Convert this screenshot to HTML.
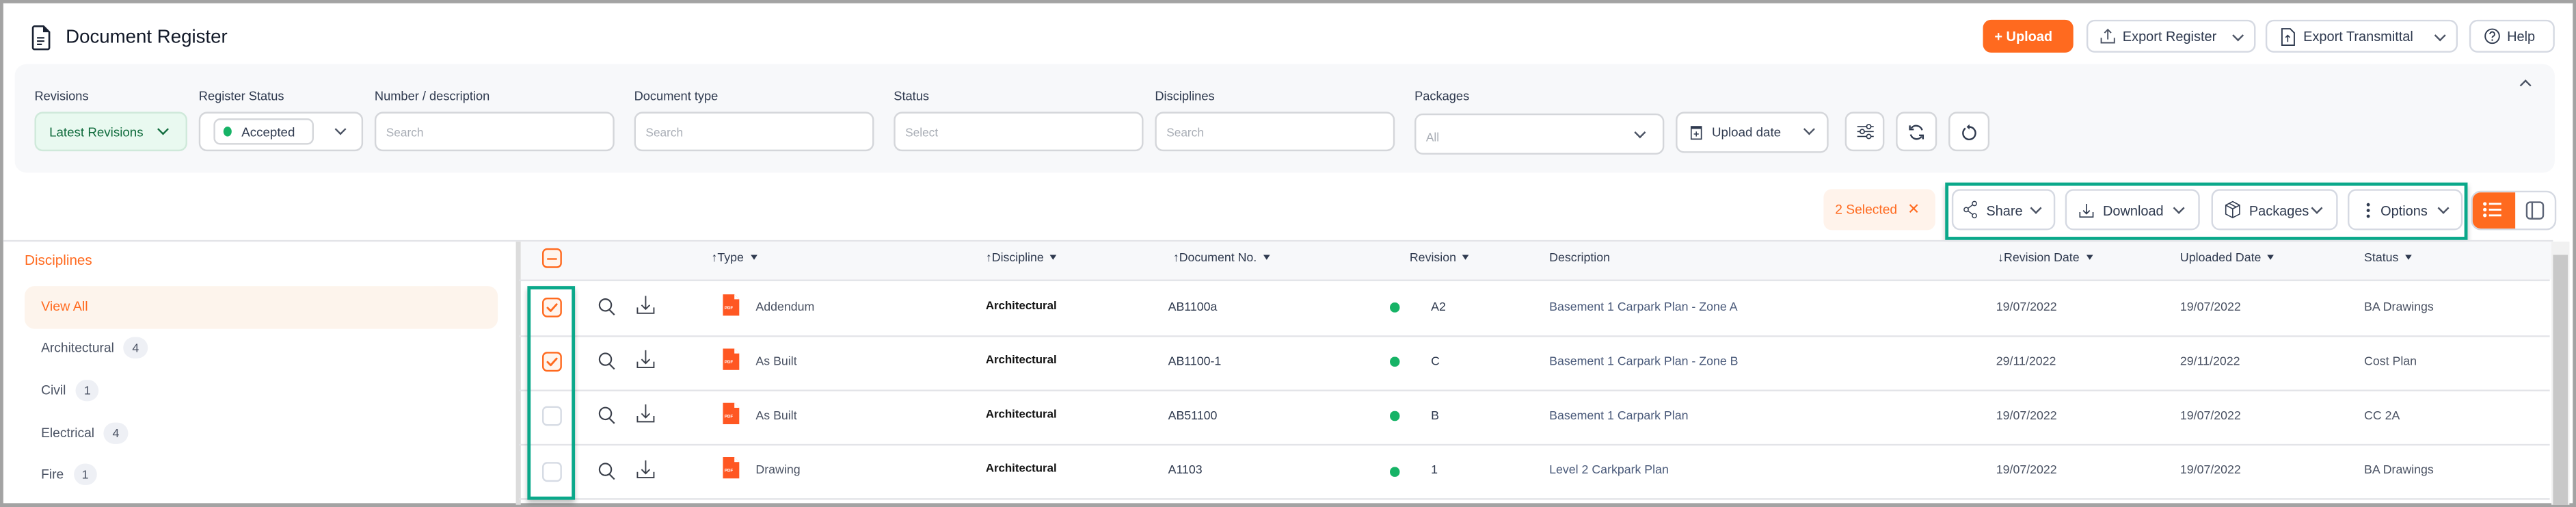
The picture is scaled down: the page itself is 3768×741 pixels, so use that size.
<!DOCTYPE html>
<html><head><meta charset="utf-8"><style>
*{box-sizing:border-box;margin:0;padding:0}
html,body{width:3768px;height:741px;overflow:hidden;background:#a3a3a3}
#w{position:absolute;left:0;top:0;width:1568px;height:308.4px;transform:scale(2.4031);transform-origin:0 0;font-family:"Liberation Sans",sans-serif;color:#2f3a4f}
.a{position:absolute}
.pg{left:2px;top:2px;width:1563.5px;height:304px;background:#fff}
.btn{position:absolute;border:1px solid #d5d9e2;border-radius:5px;background:#fff;display:flex;align-items:center;font-size:8.3px;color:#2f3a4f;white-space:nowrap}
.lbl{position:absolute;top:54px;font-size:7.6px;color:#2f3a4f}
.inp{position:absolute;top:68px;height:24px;border:1px solid #d4d6da;border-radius:5px;background:#fff;font-size:7.2px;color:#a8adb5;display:flex;align-items:center;padding-left:6px}
.chev{position:absolute;width:4.5px;height:4.5px;border-right:0.7px solid #4a5263;border-bottom:0.7px solid #4a5263;transform:rotate(45deg)}
.t{position:absolute;font-size:7.4px;white-space:nowrap}
.h{position:absolute;top:152px;font-size:7.4px;color:#2f3a4f;white-space:nowrap}
.tri{display:inline-block;width:0;height:0;border-left:2px solid transparent;border-right:2px solid transparent;border-top:3.5px solid #2f3a4f;margin-left:4px;vertical-align:1px}
.rl{position:absolute;left:316px;width:1236px;height:1px;background:#e3e4e8}
.cb{position:absolute;left:330px;width:12px;height:12px;border-radius:3px;border:0.8px solid #d6dbe4;background:#fff}
.cb.on{border-color:#ff6a1f;background:#fff5ee}
.bdg{display:inline-block;background:#eef0f5;border-radius:7px;font-size:7.4px;color:#4a5263;padding:2px 5px;margin-left:6px}
</style></head><body><div id="w">
<div class="a pg"></div>
<svg class="a" style="left:19px;top:15px" width="12" height="16" viewBox="0 0 12 16"><path d="M2 1h5.5l3.5 3.5V14a1 1 0 0 1-1 1H2a1 1 0 0 1-1-1V2a1 1 0 0 1 1-1z" fill="none" stroke="#1a2233" stroke-width="1.1"/><path d="M7.2 1v3.6h3.6z" fill="#1a2233"/><path d="M3.5 8h4.5M3.5 10h4.5M3.5 12h3" stroke="#1a2233" stroke-width="0.9"/></svg>
<div class="t" style="left:40px;top:17px;font-size:11.5px;color:#111827">Document Register</div>
<div class="btn" style="left:1207px;top:12px;width:55px;height:20px;background:#ff6a1f;border-color:#ff6a1f;color:#fff;font-weight:bold;padding-left:6px">+ Upload</div>
<div class="btn" style="left:1270px;top:12px;width:103px;height:20px;padding-left:7px"><svg width="10" height="10" viewBox="0 0 10 10"><path d="M5 7V1M3 3l2-2 2 2M1 6v3h8V6" fill="none" stroke="#4a5263" stroke-width="0.8"/></svg><span style="margin-left:4px">Export Register</span></div>
<div class="chev" style="left:1360px;top:19px"></div>
<div class="btn" style="left:1379px;top:12px;width:117px;height:20px;padding-left:8px"><svg width="9" height="11" viewBox="0 0 9 11"><path d="M1 .5h5l2.5 2.5v7.5h-7.5z" fill="none" stroke="#2f3a4f" stroke-width="0.8"/><path d="M4.5 8.5v-4M3.2 5.8l1.3-1.3 1.3 1.3" fill="none" stroke="#2f3a4f" stroke-width="0.7"/></svg><span style="margin-left:5px">Export Transmittal</span></div>
<div class="chev" style="left:1483px;top:19px"></div>
<div class="btn" style="left:1503px;top:12px;width:52px;height:20px;padding-left:8px"><svg width="10" height="10" viewBox="0 0 10 10"><circle cx="5" cy="5" r="4.3" fill="none" stroke="#2f3a4f" stroke-width="0.8"/><path d="M3.6 3.8a1.4 1.4 0 1 1 1.9 1.3c-.4.2-.5.5-.5.9" fill="none" stroke="#2f3a4f" stroke-width="0.8"/><circle cx="5" cy="7.4" r=".5" fill="#2f3a4f"/></svg><span style="margin-left:4px">Help</span></div>
<div class="a" style="left:9px;top:39px;width:1546px;height:66px;background:#f7f8fa;border-radius:7px"></div>
<div class="chev" style="left:1535px;top:50px;transform:rotate(225deg)"></div>
<div class="lbl" style="left:21px">Revisions</div>
<div class="lbl" style="left:121px">Register Status</div>
<div class="lbl" style="left:228px">Number / description</div>
<div class="lbl" style="left:386px">Document type</div>
<div class="lbl" style="left:544px">Status</div>
<div class="lbl" style="left:703px">Disciplines</div>
<div class="lbl" style="left:861px">Packages</div>
<div class="inp" style="left:21px;width:93px;background:#e9f9f0;border-color:#cfe9da;color:#0f6b3c;font-size:7.8px;padding-left:8px">Latest Revisions</div>
<div class="chev" style="left:97px;top:76px;border-color:#0f6b3c"></div>
<div class="inp" style="left:121px;width:100px"></div>
<div class="a" style="left:130px;top:72px;width:61px;height:16px;border:1px solid #d4d6da;border-radius:4px;background:#fff;font-size:7.8px;color:#2f3a4f;padding:3px 0 0 16px">Accepted</div>
<div class="a" style="left:136px;top:77px;width:5px;height:6px;border-radius:50%;background:#16b366"></div>
<div class="chev" style="left:205px;top:76px"></div>
<div class="inp" style="left:228px;width:146px">Search</div>
<div class="inp" style="left:386px;width:146px">Search</div>
<div class="inp" style="left:544px;width:152px">Select</div>
<div class="inp" style="left:703px;width:146px">Search</div>
<div class="inp" style="left:861px;top:69px;height:25px;width:152px;padding-top:3px">All</div>
<div class="chev" style="left:996px;top:78px"></div>
<div class="inp" style="left:1020px;top:68px;height:25px;width:93px;color:#2f3a4f;font-size:7.8px;padding-left:8px"><svg width="7" height="9" viewBox="0 0 7 9"><rect x=".4" y="1" width="6.2" height="7.6" fill="none" stroke="#2f3a4f" stroke-width=".7"/><rect x=".4" y="1" width="6.2" height="1.4" fill="#2f3a4f"/><path d="M3.5 4v3M2 5.5h3" stroke="#2f3a4f" stroke-width=".6"/></svg><span style="margin-left:6px">Upload date</span></div>
<div class="chev" style="left:1099px;top:76px"></div>
<div class="inp" style="left:1123px;width:24px;padding:0;justify-content:center"><svg width="11" height="10" viewBox="0 0 11 10"><path d="M.5 2h10M.5 5h10M.5 8h10" stroke="#2f3a4f" stroke-width=".7"/><circle cx="7.5" cy="2" r="1.3" fill="#fff" stroke="#2f3a4f" stroke-width=".7"/><circle cx="3.5" cy="5" r="1.3" fill="#fff" stroke="#2f3a4f" stroke-width=".7"/><circle cx="7.5" cy="8" r="1.3" fill="#fff" stroke="#2f3a4f" stroke-width=".7"/></svg></div>
<div class="inp" style="left:1154px;width:25px;padding:0;justify-content:center"><svg width="11" height="11" viewBox="0 0 11 11"><path d="M9 4.2A3.8 3.8 0 0 0 2.3 3M2 6.8a3.8 3.8 0 0 0 6.7 1.2" fill="none" stroke="#2f3a4f" stroke-width="1"/><path d="M1.5 1.3v2.4h2.4M9.5 9.7V7.3H7.1" fill="none" stroke="#2f3a4f" stroke-width="1"/></svg></div>
<div class="inp" style="left:1186px;width:25px;padding:0;justify-content:center"><svg width="11" height="11" viewBox="0 0 11 11"><path d="M3.3 3A3.8 3.8 0 1 0 5.5 2.2" fill="none" stroke="#2f3a4f" stroke-width="1"/><path d="M5.8.6L4 2.2l1.8 1.6z" fill="#2f3a4f"/></svg></div>
<div class="a" style="left:1110px;top:115px;width:68px;height:25px;background:#fff3eb;border-radius:5px;color:#ff6a1f;font-size:8px;padding:7px 0 0 7px">2 Selected <span style="margin-left:4px;font-size:9px">✕</span></div>
<div class="a" style="left:1184px;top:111px;width:318px;height:35px;border:2px solid #0aa88a;box-shadow:0 2px 3px rgba(0,0,0,.25)"></div>
<div class="btn" style="left:1188px;top:115px;width:63px;height:25px;padding-left:6px"><svg width="9" height="11" viewBox="0 0 9 11"><circle cx="6.8" cy="1.8" r="1.3" fill="none" stroke="#2f3a4f" stroke-width=".6"/><circle cx="1.8" cy="5.5" r="1.3" fill="none" stroke="#2f3a4f" stroke-width=".6"/><circle cx="6.8" cy="9.2" r="1.3" fill="none" stroke="#2f3a4f" stroke-width=".6"/><path d="M2.9 4.7l2.8-2.1M2.9 6.3l2.8 2.1" stroke="#2f3a4f" stroke-width=".6"/></svg><span style="margin-left:5px">Share</span></div>
<div class="chev" style="left:1237px;top:124px"></div>
<div class="btn" style="left:1257px;top:115px;width:82px;height:25px;padding-left:7px"><svg width="10" height="10" viewBox="0 0 10 10"><path d="M5 1v6M3 5l2 2 2-2M1 6v3h8V6" fill="none" stroke="#2f3a4f" stroke-width=".7"/></svg><span style="margin-left:5px">Download</span></div>
<div class="chev" style="left:1324px;top:124px"></div>
<div class="btn" style="left:1346px;top:115px;width:77px;height:25px;padding-left:7px"><svg width="10" height="11" viewBox="0 0 10 11"><path d="M5 .6l4.2 2.2v5.4L5 10.4.8 8.2V2.8z M.8 2.8L5 5l4.2-2.2M5 5v5.4M2.9 1.7l4.2 2.2" fill="none" stroke="#2f3a4f" stroke-width=".65"/></svg><span style="margin-left:5px">Packages</span></div>
<div class="chev" style="left:1408px;top:124px"></div>
<div class="btn" style="left:1429px;top:115px;width:70px;height:25px;padding-left:10px"><svg width="3" height="10" viewBox="0 0 3 10"><circle cx="1.5" cy="1.5" r="1" fill="#2f3a4f"/><circle cx="1.5" cy="5" r="1" fill="#2f3a4f"/><circle cx="1.5" cy="8.5" r="1" fill="#2f3a4f"/></svg><span style="margin-left:6px">Options</span></div>
<div class="chev" style="left:1485px;top:124px"></div>
<div class="a" style="left:1504px;top:116px;width:52px;height:24px;border:1px solid #d5d9e2;border-radius:6px;background:#fff;overflow:hidden"><div style="width:26px;height:24px;background:#ff6a1f"></div></div>
<svg class="a" style="left:1511px;top:122px" width="12" height="11" viewBox="0 0 12 11"><circle cx="1.5" cy="2" r="1.1" fill="#fff"/><circle cx="1.5" cy="5.5" r="1.1" fill="#fff"/><circle cx="1.5" cy="9" r="1.1" fill="#fff"/><path d="M4 2h7.5M4 5.5h7.5M4 9h7.5" stroke="#fff" stroke-width="1.2"/></svg>
<svg class="a" style="left:1537px;top:122px" width="12" height="12" viewBox="0 0 12 12"><rect x="1" y="1" width="10" height="10" rx="2" fill="none" stroke="#5d6577" stroke-width="1"/><path d="M4.3 1v10" stroke="#5d6577" stroke-width="1"/></svg>
<div class="a" style="left:2px;top:146px;width:1552px;height:1px;background:#e3e4e8"></div>
<div class="a" style="left:314px;top:147px;width:2.5px;height:160px;background:#dcdcdc"></div>
<div class="t" style="left:15px;top:153px;font-size:8.6px;color:#ff6a1f">Disciplines</div>
<div class="a" style="left:15px;top:174px;width:288px;height:26px;background:#fdf4ec;border-radius:6px"></div>
<div class="t" style="left:25px;top:182px;font-size:8.2px;color:#ff6a1f">View All</div>
<div class="t" style="left:25px;top:205px;font-size:8px;color:#4a5263">Architectural<span class="bdg">4</span></div>
<div class="t" style="left:25px;top:231px;font-size:8px;color:#4a5263">Civil<span class="bdg">1</span></div>
<div class="t" style="left:25px;top:257px;font-size:8px;color:#4a5263">Electrical<span class="bdg">4</span></div>
<div class="t" style="left:25px;top:282px;font-size:8px;color:#4a5263">Fire<span class="bdg">1</span></div>
<div class="a" style="left:317px;top:147px;width:1236px;height:23px;background:#f7f8fa"></div>
<div class="a" style="left:1553px;top:147px;width:11px;height:160px;background:#f1f1f1"></div>
<div class="a" style="left:1554px;top:155px;width:9px;height:152px;background:#c8c8c8"></div>
<div class="a" style="left:330px;top:151px;width:12px;height:12px;border:0.9px solid #ff6a1f;border-radius:3px;background:#fff5ee"></div>
<div class="a" style="left:333px;top:156.5px;width:6px;height:1.3px;background:#ff6a1f"></div>
<div class="h" style="left:433px">↑Type<span class="tri"></span></div>
<div class="h" style="left:600px">↑Discipline<span class="tri"></span></div>
<div class="h" style="left:714px">↑Document No.<span class="tri"></span></div>
<div class="h" style="left:858px">Revision<span class="tri"></span></div>
<div class="h" style="left:943px">Description</div>
<div class="h" style="left:1216px">↓Revision Date<span class="tri"></span></div>
<div class="h" style="left:1327px">Uploaded Date<span class="tri"></span></div>
<div class="h" style="left:1439px">Status<span class="tri"></span></div>
<div class="rl" style="top:170px"></div>
<div class="rl" style="top:204px"></div>
<div class="rl" style="top:237px"></div>
<div class="rl" style="top:270px"></div>
<div class="rl" style="top:303px"></div>
<div class="cb on" style="top:181px"></div>
<svg class="a" style="left:330px;top:181px" width="12" height="12" viewBox="0 0 12 12"><path d="M3.3 6.2l1.9 1.9 3.6-4" fill="none" stroke="#ff6a1f" stroke-width="1.2" stroke-linecap="round" stroke-linejoin="round"/></svg>
<div class="cb on" style="top:214px"></div>
<svg class="a" style="left:330px;top:214px" width="12" height="12" viewBox="0 0 12 12"><path d="M3.3 6.2l1.9 1.9 3.6-4" fill="none" stroke="#ff6a1f" stroke-width="1.2" stroke-linecap="round" stroke-linejoin="round"/></svg>
<div class="cb" style="top:247px"></div>
<div class="cb" style="top:281px"></div>
<div class="a" style="left:321px;top:174px;width:29px;height:130px;border:2px solid #0aa88a;box-shadow:0 2px 3px rgba(0,0,0,.25)"></div>
<svg class="a" style="left:364px;top:181px" width="12" height="90" viewBox="0 0 12 90"><g fill="none" stroke="#3a3f4a" stroke-width=".9"><circle cx="4.5" cy="4.5" r="3.6"/><path d="M7 7.5l3 3"/><circle cx="4.5" cy="37.5" r="3.6"/><path d="M7 40.5l3 3"/><circle cx="4.5" cy="70.5" r="3.6"/><path d="M7 73.5l3 3"/></g></svg>
<svg class="a" style="left:364px;top:281px" width="12" height="12" viewBox="0 0 12 12"><g fill="none" stroke="#3a3f4a" stroke-width=".9"><circle cx="4.5" cy="4.5" r="3.6"/><path d="M7 7.5l3 3"/></g></svg>
<svg class="a" style="left:387px;top:180px" width="12" height="120" viewBox="0 0 12 120"><g fill="none" stroke="#3a3f4a" stroke-width=".8"><path d="M6 0v8M3.5 5.5L6 8l2.5-2.5M1 7v3.5h10V7"/><path d="M6 33v8M3.5 38.5L6 41l2.5-2.5M1 40v3.5h10V40"/><path d="M6 66v8M3.5 71.5L6 74l2.5-2.5M1 73v3.5h10V73"/><path d="M6 100v8M3.5 105.5L6 108l2.5-2.5M1 107v3.5h10V107"/></g></svg>
<svg class="a" style="left:440px;top:179px" width="10" height="125" viewBox="0 0 10 125"><g><path d="M0 0h7l3 3v10H0z" fill="#ff5722"/><path d="M0 33h7l3 3v10H0z" fill="#ff5722"/><path d="M0 66h7l3 3v10H0z" fill="#ff5722"/><path d="M0 99h7l3 3v10H0z" fill="#ff5722"/><path d="M7 0v3h3M7 33v3h3M7 66v3h3M7 99v3h3" fill="#fff"/></g><g fill="#fff" font-size="2.6" font-family="Liberation Sans" font-weight="bold"><text x="1" y="9">PDF</text><text x="1" y="42">PDF</text><text x="1" y="75">PDF</text><text x="1" y="108">PDF</text></g></svg>
<div class="t" style="left:460px;top:182px;color:#4a5263">Addendum</div>
<div class="t" style="left:460px;top:215px;color:#4a5263">As Built</div>
<div class="t" style="left:460px;top:248px;color:#4a5263">As Built</div>
<div class="t" style="left:460px;top:281px;color:#4a5263">Drawing</div>
<div class="t" style="left:600px;top:183px;color:#111;font-weight:bold;font-size:7px">Architectural</div>
<div class="t" style="left:600px;top:216px;color:#111;font-weight:bold;font-size:7px">Architectural</div>
<div class="t" style="left:600px;top:249px;color:#111;font-weight:bold;font-size:7px">Architectural</div>
<div class="t" style="left:600px;top:282px;color:#111;font-weight:bold;font-size:7px">Architectural</div>
<div class="t" style="left:711px;top:182px;color:#2f3a4f">AB1100a</div>
<div class="t" style="left:711px;top:215px;color:#2f3a4f">AB1100-1</div>
<div class="t" style="left:711px;top:248px;color:#2f3a4f">AB51100</div>
<div class="t" style="left:711px;top:281px;color:#2f3a4f">A1103</div>
<div class="a" style="left:846px;top:184px;width:5.5px;height:6px;border-radius:50%;background:#16b366"></div>
<div class="a" style="left:846px;top:217px;width:5.5px;height:6px;border-radius:50%;background:#16b366"></div>
<div class="a" style="left:846px;top:250px;width:5.5px;height:6px;border-radius:50%;background:#16b366"></div>
<div class="a" style="left:846px;top:284px;width:5.5px;height:6px;border-radius:50%;background:#16b366"></div>
<div class="t" style="left:871px;top:182px;color:#2f3a4f">A2</div>
<div class="t" style="left:871px;top:215px;color:#2f3a4f">C</div>
<div class="t" style="left:871px;top:248px;color:#2f3a4f">B</div>
<div class="t" style="left:871px;top:281px;color:#2f3a4f">1</div>
<div class="t" style="left:943px;top:182px;color:#4a5a7a">Basement 1 Carpark Plan - Zone A</div>
<div class="t" style="left:943px;top:215px;color:#4a5a7a">Basement 1 Carpark Plan - Zone B</div>
<div class="t" style="left:943px;top:248px;color:#4a5a7a">Basement 1 Carpark Plan</div>
<div class="t" style="left:943px;top:281px;color:#4a5a7a">Level 2 Carkpark Plan</div>
<div class="t" style="left:1215px;top:182px;color:#4a5263">19/07/2022</div>
<div class="t" style="left:1215px;top:215px;color:#4a5263">29/11/2022</div>
<div class="t" style="left:1215px;top:248px;color:#4a5263">19/07/2022</div>
<div class="t" style="left:1215px;top:281px;color:#4a5263">19/07/2022</div>
<div class="t" style="left:1327px;top:182px;color:#4a5263">19/07/2022</div>
<div class="t" style="left:1327px;top:215px;color:#4a5263">29/11/2022</div>
<div class="t" style="left:1327px;top:248px;color:#4a5263">19/07/2022</div>
<div class="t" style="left:1327px;top:281px;color:#4a5263">19/07/2022</div>
<div class="t" style="left:1439px;top:182px;color:#4a5263">BA Drawings</div>
<div class="t" style="left:1439px;top:215px;color:#4a5263">Cost Plan</div>
<div class="t" style="left:1439px;top:248px;color:#4a5263">CC 2A</div>
<div class="t" style="left:1439px;top:281px;color:#4a5263">BA Drawings</div>
</div></body></html>
